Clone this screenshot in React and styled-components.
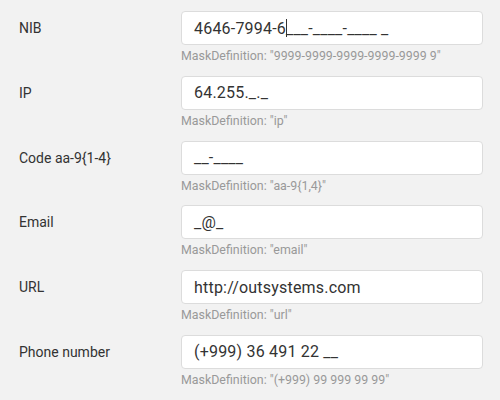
import React from 'react';
import styled, { createGlobalStyle } from 'styled-components';

const GlobalStyle = createGlobalStyle`
  html, body {
    margin: 0;
    padding: 0;
    background: #f2f2f2;
  }
  body {
    font-family: Roboto, "Liberation Sans", sans-serif;
  }
`;

const Form = styled.div`
  width: 500px;
  height: 400px;
  box-sizing: border-box;
  padding: 11px 17px 0 19px;
  background: #f2f2f2;
  overflow: hidden;
`;

const Row = styled.div`
  display: grid;
  grid-template-columns: 162px 1fr;
  grid-template-rows: 34px auto;
  margin-bottom: 11.8px;
`;

const Label = styled.label`
  align-self: center;
  font-size: 14px;
  color: #333;
`;

const Field = styled.div`
  box-sizing: border-box;
  height: 34px;
  display: flex;
  align-items: center;
  padding: 0 12px;
  background: #fff;
  border: 1px solid #dcdcdc;
  border-radius: 4px;
  font-size: 16px;
  letter-spacing: 0.2px;
  color: #333;
  white-space: pre;
`;

const Caret = styled.span`
  display: inline-block;
  width: 1px;
  height: 18px;
  margin-right: -1px;
  background: #333;
  vertical-align: middle;
`;

const Hint = styled.div`
  grid-column: 2;
  margin-top: 3px;
  font-size: 12.4px;
  line-height: 16px;
  color: #999;
`;

const fields = [
  { label: 'NIB', before: '4646-7994-6', after: '___-____-____ _', caret: true, mask: '9999-9999-9999-9999-9999 9' },
  { label: 'IP', before: '64.255._._', mask: 'ip' },
  { label: 'Code aa-9{1-4}', before: '__-____', mask: 'aa-9{1,4}' },
  { label: 'Email', before: '_@_', mask: 'email' },
  { label: 'URL', before: 'http://outsystems.com', mask: 'url' },
  { label: 'Phone number', before: '(+999) 36 491 22 __', mask: '(+999) 99 999 99 99' },
];

export default function App() {
  return (
    <>
      <GlobalStyle />
      <Form>
        {fields.map((f) => (
          <Row key={f.label}>
            <Label>{f.label}</Label>
            <Field>
              {f.before}
              {f.caret && <Caret />}
              {f.after}
            </Field>
            <Hint>MaskDefinition: "{f.mask}"</Hint>
          </Row>
        ))}
      </Form>
    </>
  );
}
